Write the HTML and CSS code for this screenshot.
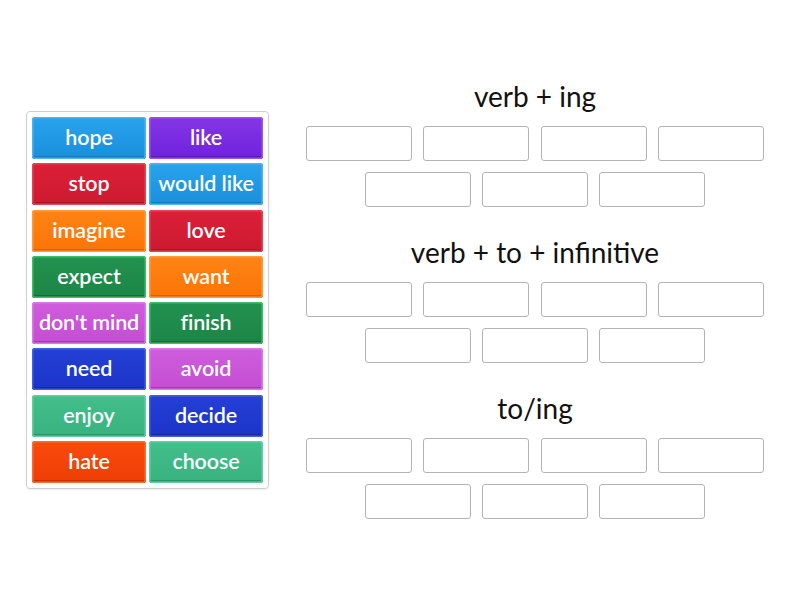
FILE: index.html
```html
<!DOCTYPE html>
<html>
<head>
<meta charset="utf-8">
<link rel="stylesheet" href="styles.css">
</head>
<body>
<div class="page">
  <div class="bank">
    <div class="tile blue">hope</div>
    <div class="tile purple">like</div>
    <div class="tile red">stop</div>
    <div class="tile blue">would like</div>
    <div class="tile orange">imagine</div>
    <div class="tile red">love</div>
    <div class="tile green">expect</div>
    <div class="tile orange">want</div>
    <div class="tile orchid">don't mind</div>
    <div class="tile green">finish</div>
    <div class="tile navy">need</div>
    <div class="tile orchid">avoid</div>
    <div class="tile teal">enjoy</div>
    <div class="tile navy">decide</div>
    <div class="tile vermilion">hate</div>
    <div class="tile teal">choose</div>
  </div>
  <div class="groups">
    <div class="group">
      <div class="title">verb + ing</div>
      <div class="row"><div class="slot"></div><div class="slot"></div><div class="slot"></div><div class="slot"></div></div>
      <div class="row"><div class="slot"></div><div class="slot"></div><div class="slot"></div></div>
    </div>
    <div class="group">
      <div class="title">verb + to + infinitive</div>
      <div class="row"><div class="slot"></div><div class="slot"></div><div class="slot"></div><div class="slot"></div></div>
      <div class="row"><div class="slot"></div><div class="slot"></div><div class="slot"></div></div>
    </div>
    <div class="group">
      <div class="title">to/ing</div>
      <div class="row"><div class="slot"></div><div class="slot"></div><div class="slot"></div><div class="slot"></div></div>
      <div class="row"><div class="slot"></div><div class="slot"></div><div class="slot"></div></div>
    </div>
  </div>
</div>
</body>
</html>
```

FILE: styles.css
```css
html, body {
  margin: 0;
  padding: 0;
  background: #ffffff;
}
body {
  font-family: "Lato", "Noto Sans", sans-serif;
  width: 800px;
  height: 600px;
  overflow: hidden;
}
.page {
  display: flex;
  align-items: flex-start;
}
.bank {
  flex: none;
  margin-left: 26px;
  margin-top: 111px;
  padding: 5px;
  border: 1px solid #cfcfcf;
  border-radius: 4px;
  display: grid;
  grid-template-columns: 114px 114px;
  grid-auto-rows: 42px;
  column-gap: 3px;
  row-gap: 4.3px;
  box-shadow: 0 1px 2px rgba(0,0,0,0.08);
}
.tile {
  display: flex;
  align-items: center;
  justify-content: center;
  color: #ffffff;
  font-size: 21.5px;
  font-weight: 600;
  border-radius: 3px;
  white-space: nowrap;
  letter-spacing: -0.1px;
  padding-bottom: 2px;
  box-sizing: border-box;
}
.blue { background: linear-gradient(#29a3ee, #1a8fdc); box-shadow: inset 0 0 0 1.5px #4cb4f2, inset 0 -3px 0 #1479c0; }
.purple { background: linear-gradient(#8436e6, #6f22dd); box-shadow: inset 0 0 0 1.5px #9a55ee, inset 0 -3px 0 #5b17c0; }
.red { background: linear-gradient(#dc2038, #cc1a30); box-shadow: inset 0 0 0 1.5px #e54458, inset 0 -3px 0 #a8142a; }
.orange { background: linear-gradient(#ff8415, #fb7406); box-shadow: inset 0 0 0 1.5px #ff9a40, inset 0 -3px 0 #d86200; }
.green { background: linear-gradient(#22924f, #1c8546); box-shadow: inset 0 0 0 1.5px #3dc06a, inset 0 -3px 0 #166c39; }
.orchid { background: linear-gradient(#cf5ddc, #c44dd3); box-shadow: inset 0 0 0 1.5px #da7be4, inset 0 -3px 0 #a53bb4; }
.navy { background: linear-gradient(#2440d6, #1c33c8); box-shadow: inset 0 0 0 1.5px #4560e2, inset 0 -3px 0 #1528a6; }
.teal { background: linear-gradient(#43bf8c, #38b27f); box-shadow: inset 0 0 0 1.5px #63cfa2, inset 0 -3px 0 #2c9568; }
.vermilion { background: linear-gradient(#fa4a0c, #ee3e04); box-shadow: inset 0 0 0 1.5px #ff6a35, inset 0 -3px 0 #c83200; }

.groups {
  flex: none;
  margin-left: 37px;
  margin-top: 81px;
  display: flex;
  flex-direction: column;
  gap: 30px;
  width: 458px;
}
.group {
  display: flex;
  flex-direction: column;
  align-items: center;
}
.title {
  font-family: "Lato", "Noto Sans", sans-serif;
  font-size: 28px;
  line-height: 30px;
  height: 30px;
  color: #111;
  margin-bottom: 15px;
}
.row {
  display: flex;
  gap: 11.33px;
  justify-content: center;
}
.row + .row {
  margin-top: 11px;
}
.slot {
  flex: none;
  width: 106px;
  height: 35px;
  box-sizing: border-box;
  border: 1px solid #b4b4b4;
  border-radius: 3px;
  background: #fff;
}
```
